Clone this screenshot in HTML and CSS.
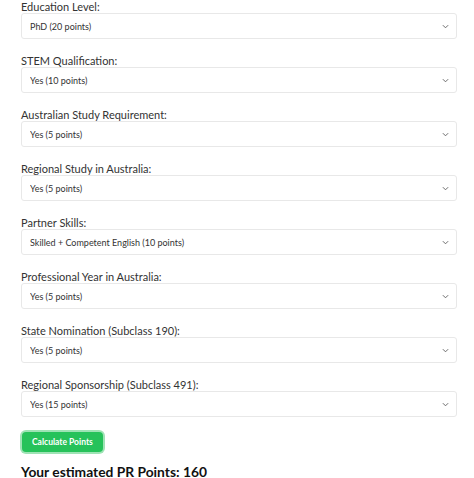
FILE: index.html
```html
<!DOCTYPE html>
<html>
<head>
<meta charset="utf-8">
<link rel="stylesheet" href="styles.css">
</head>
<body>
<form class="calc">
  <div class="field">
    <label class="label">Education Level:</label>
    <div class="select-wrap">
      <select class="select"><option>PhD (20 points)</option></select>
      <svg class="chev" viewBox="0 0 8 5" width="7" height="5"><path d="M1 1l3 3 3-3" fill="none" stroke="#666" stroke-width="1.1"/></svg>
    </div>
  </div>
  <div class="field">
    <label class="label">STEM Qualification:</label>
    <div class="select-wrap">
      <select class="select"><option>Yes (10 points)</option></select>
      <svg class="chev" viewBox="0 0 8 5" width="7" height="5"><path d="M1 1l3 3 3-3" fill="none" stroke="#666" stroke-width="1.1"/></svg>
    </div>
  </div>
  <div class="field">
    <label class="label">Australian Study Requirement:</label>
    <div class="select-wrap">
      <select class="select"><option>Yes (5 points)</option></select>
      <svg class="chev" viewBox="0 0 8 5" width="7" height="5"><path d="M1 1l3 3 3-3" fill="none" stroke="#666" stroke-width="1.1"/></svg>
    </div>
  </div>
  <div class="field">
    <label class="label">Regional Study in Australia:</label>
    <div class="select-wrap">
      <select class="select"><option>Yes (5 points)</option></select>
      <svg class="chev" viewBox="0 0 8 5" width="7" height="5"><path d="M1 1l3 3 3-3" fill="none" stroke="#666" stroke-width="1.1"/></svg>
    </div>
  </div>
  <div class="field">
    <label class="label">Partner Skills:</label>
    <div class="select-wrap">
      <select class="select"><option>Skilled + Competent English (10 points)</option></select>
      <svg class="chev" viewBox="0 0 8 5" width="7" height="5"><path d="M1 1l3 3 3-3" fill="none" stroke="#666" stroke-width="1.1"/></svg>
    </div>
  </div>
  <div class="field">
    <label class="label">Professional Year in Australia:</label>
    <div class="select-wrap">
      <select class="select"><option>Yes (5 points)</option></select>
      <svg class="chev" viewBox="0 0 8 5" width="7" height="5"><path d="M1 1l3 3 3-3" fill="none" stroke="#666" stroke-width="1.1"/></svg>
    </div>
  </div>
  <div class="field">
    <label class="label">State Nomination (Subclass 190):</label>
    <div class="select-wrap">
      <select class="select"><option>Yes (5 points)</option></select>
      <svg class="chev" viewBox="0 0 8 5" width="7" height="5"><path d="M1 1l3 3 3-3" fill="none" stroke="#666" stroke-width="1.1"/></svg>
    </div>
  </div>
  <div class="field">
    <label class="label">Regional Sponsorship (Subclass 491):</label>
    <div class="select-wrap">
      <select class="select"><option>Yes (15 points)</option></select>
      <svg class="chev" viewBox="0 0 8 5" width="7" height="5"><path d="M1 1l3 3 3-3" fill="none" stroke="#666" stroke-width="1.1"/></svg>
    </div>
  </div>
  <button type="button" class="btn">Calculate Points</button>
  <h2 class="result">Your estimated PR Points: 160</h2>
</form>
</body>
</html>
```
FILE: styles.css
```css
html, body {
  margin: 0;
  padding: 0;
  background: #ffffff;
}
body {
  font-family: Lato, "Noto Sans", sans-serif;
  color: #333333;
}
.calc {
  width: 436px;
  padding-left: 21px;
  display: flex;
  flex-direction: column;
  align-items: flex-start;
}
.field {
  width: 100%;
  display: flex;
  flex-direction: column;
  margin-bottom: 15px;
}
.label {
  font-size: 11px;
  line-height: 13px;
  margin-bottom: 0;
  color: #333;
}
.select-wrap {
  position: relative;
  width: 100%;
}
.select {
  -webkit-appearance: none;
  appearance: none;
  width: 100%;
  height: 26px;
  box-sizing: border-box;
  border: 1px solid #e8e8e8;
  border-radius: 3px;
  background: #fff;
  font-family: Lato, "Noto Sans", sans-serif;
  font-size: 9px;
  color: #333;
  padding: 0 0 0 8px;
  margin: 0;
}
.chev {
  position: absolute;
  right: 8px;
  top: 11px;
}
.btn {
  margin-top: 0;
  background: #26c25a;
  color: #ffffff;
  border: none;
  border-radius: 4px;
  box-shadow: 0 0 0 2px #9fe3b5;
  font-family: Lato, "Noto Sans", sans-serif;
  font-weight: 700;
  font-size: 8.5px;
  height: 20px;
  padding: 0 10px;
  margin-left: 1px;
}
.result {
  margin: 13px 0 0;
  font-size: 13.8px;
  line-height: 13px;
  font-weight: 700;
  color: #111;
}
```
